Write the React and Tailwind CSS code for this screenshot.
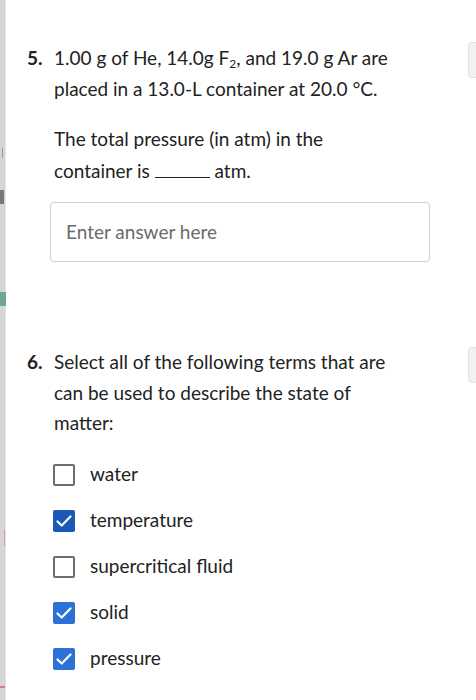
import React from "react";

const font = { fontFamily: "Lato, 'Noto Sans', sans-serif" };

function Check({ checked, dark }) {
  if (!checked) {
    return (
      <span className="w-[22px] h-[22px] rounded-[2px] border-2 border-[#6e6e6e] bg-white shrink-0" />
    );
  }
  return (
    <span
      className={`w-[22px] h-[22px] rounded-[2px] flex items-center justify-center shrink-0 ${
        dark ? "bg-[#1c58b8]" : "bg-[#2c72d6]"
      }`}
    >
      <svg width="22" height="22" viewBox="0 0 22 22" fill="none">
        <path d="M4.5 11.5l4.2 4L17.5 6.5" stroke="white" strokeWidth="2.2" strokeLinecap="round" strokeLinejoin="round" />
      </svg>
    </span>
  );
}

const options = [
  { label: "water", checked: false },
  { label: "temperature", checked: true, dark: true },
  { label: "supercritical fluid", checked: false },
  { label: "solid", checked: true },
  { label: "pressure", checked: true },
];

export default function App() {
  return (
    <div className="w-[476px] h-[700px] bg-white flex overflow-hidden text-[#222]" style={font}>
      {/* cut-off sidebar behind */}
      <div className="w-[6px] bg-[#d6d6d6] border-r border-[#e4e4e4] shrink-0 relative">
        <span className="absolute left-0 top-[148px] w-[3px] h-[10px] border-r border-[#999]" />
        <span className="absolute left-0 top-[190px] w-[4px] h-[14px] bg-[#777]" />
        <span className="absolute left-0 top-[292px] w-[6px] h-[14px] bg-[#6fa88e]" />
        <span className="absolute left-0 top-[530px] w-[5px] h-[16px] border-r border-[#e09a9a]" />
        <span className="absolute left-0 top-[686px] w-[5px] h-[12px] border-t-2 border-[#e07a7a]" />
      </div>

      <div className="flex-1 flex flex-col">
        {/* Question 5 */}
        <div className="flex pt-[42px]">
          <div className="pl-[21px] flex">
            <div className="w-[27px] text-[19px] leading-[31px] font-bold">5.</div>
            <div className="w-[376px]">
              <p className="text-[19px] leading-[31px]">
                1.00 g of He, 14.0g F<sub className="text-[12px]">2</sub>, and 19.0 g Ar are
                <br />
                placed in a 13.0-L container at 20.0 °C.
              </p>
              <p className="text-[19px] leading-[31.5px] mt-[19px]">
                The total pressure (in atm) in the
                <br />
                container is{" "}
                <span className="inline-block w-[55px] border-b-[1.5px] border-[#222] align-baseline" />{" "}
                atm.
              </p>
              <div className="mt-[16px] -ml-[4px] w-[380px] h-[60px] rounded-[4px] border border-[#d2d2d2] flex items-center px-[15px]">
                <span className="text-[19px] text-[#6b6b6b]">Enter answer here</span>
              </div>
            </div>
          </div>
          <div className="ml-auto w-[8px] h-[36px] rounded-l-[4px] bg-[#f1f1f1] border border-r-0 border-[#e4e4e4]" />
        </div>

        {/* Question 6 */}
        <div className="flex mt-[85px]">
          <div className="pl-[21px] flex">
            <div className="w-[27px] text-[19px] leading-[30.5px] font-bold">6.</div>
            <div className="w-[376px]">
              <p className="text-[19px] leading-[30.5px]">
                Select all of the following terms that are
                <br />
                can be used to describe the state of
                <br />
                matter:
              </p>
              <div className="mt-[13px] flex flex-col">
                {options.map((o) => (
                  <div key={o.label} className="h-[46px] flex items-center gap-[15px] -ml-[1px]">
                    <Check checked={o.checked} dark={o.dark} />
                    <span className="text-[19px]">{o.label}</span>
                  </div>
                ))}
              </div>
            </div>
          </div>
          <div className="ml-auto w-[8px] h-[36px] rounded-l-[4px] bg-[#f1f1f1] border border-r-0 border-[#e4e4e4]" />
        </div>
      </div>
    </div>
  );
}
